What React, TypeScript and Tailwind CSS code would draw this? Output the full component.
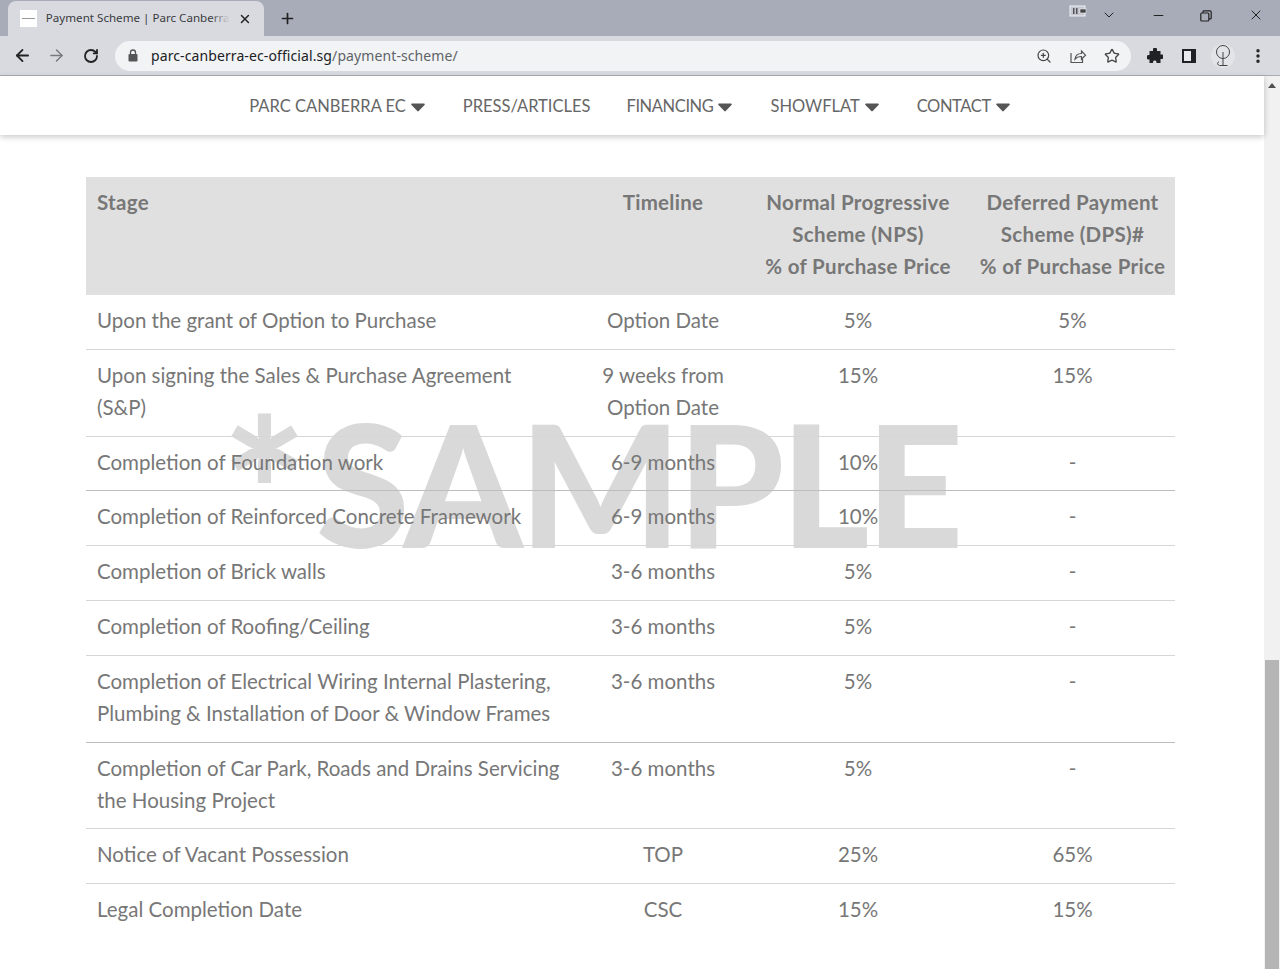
import { Star, X, Plus, Minus, ChevronDown, ZoomIn, MoreVertical, ArrowLeft, ArrowRight, RotateCw } from "lucide-react";

const navItems = [
  { label: "PARC CANBERRA EC", caret: true, track: "", space: "mx-[19px]" },
  { label: "PRESS/ARTICLES", caret: false, track: "", space: "mx-[19px]" },
  { label: "FINANCING", caret: true, track: "tracking-[-0.4px]", space: "ml-[17px] mr-[19px]" },
  { label: "SHOWFLAT", caret: true, track: "", space: "mx-[19px]" },
  { label: "CONTACT", caret: true, track: "tracking-[-0.4px]", space: "mx-[19px]" },
];

const rows = [
  { stage: ["Upon the grant of Option to Purchase"], time: ["Option Date"], nps: "5%", dps: "5%", line: "border-[#d6d6d6]" },
  { stage: ["Upon signing the Sales & Purchase Agreement", "(S&P)"], time: ["9 weeks from", "Option Date"], nps: "15%", dps: "15%", line: "border-[#d6d6d6]" },
  { stage: ["Completion of Foundation work"], time: ["6-9 months"], nps: "10%", dps: "-", line: "border-[#bdbdbd]" },
  { stage: ["Completion of Reinforced Concrete Framework"], time: ["6-9 months"], nps: "10%", dps: "-", line: "border-[#d6d6d6]" },
  { stage: ["Completion of Brick walls"], time: ["3-6 months"], nps: "5%", dps: "-", line: "border-[#d6d6d6]" },
  { stage: ["Completion of Roofing/Ceiling"], time: ["3-6 months"], nps: "5%", dps: "-", line: "border-[#d6d6d6]" },
  { stage: ["Completion of Electrical Wiring Internal Plastering,", "Plumbing & Installation of Door & Window Frames"], time: ["3-6 months"], nps: "5%", dps: "-", line: "border-[#bdbdbd]" },
  { stage: ["Completion of Car Park, Roads and Drains Servicing", "the Housing Project"], time: ["3-6 months"], nps: "5%", dps: "-", line: "border-[#d6d6d6]" },
  { stage: ["Notice of Vacant Possession"], time: ["TOP"], nps: "25%", dps: "65%", line: "border-[#d6d6d6]" },
  { stage: ["Legal Completion Date"], time: ["CSC"], nps: "15%", dps: "15%", line: "border-transparent" },
];

function Caret() {
  return (
    <svg width="14" height="9" viewBox="0 0 14 9" className="ml-[5px] mt-[2px]">
      <path d="M1.2 0.5h11.6c.9 0 1.3 1 .7 1.6L7.7 8.1c-.4.4-1 .4-1.4 0L.5 2.1C-.1 1.5.3.5 1.2.5z" fill="#555" />
    </svg>
  );
}

function Lines({ items }: { items: string[] }) {
  return (
    <>
      {items.map((t) => (
        <div key={t}>{t}</div>
      ))}
    </>
  );
}

function BrowserChrome() {
  return (
    <div className="h-[76px] shrink-0 border-b border-[#a9abb3]" style={{ fontFamily: '"Noto Sans", sans-serif' }}>
      <div className="h-9 bg-[#a8acb9] flex items-end pl-2 relative">
        <div className="w-[256px] h-[35px] bg-[#d8dae0] rounded-t-lg flex items-center pl-3 pr-3">
          <div className="w-[17px] h-[17px] bg-white flex items-center justify-center">
            <div className="w-[13px] h-px bg-[#999]" />
          </div>
          <span className="relative ml-[9px] -mt-[2px] w-[186px] overflow-hidden whitespace-nowrap text-[11.600px] text-[#3a3b3d]">
            Payment Scheme | Parc Canberra
            <span className="absolute right-0 top-0 h-full w-5 bg-gradient-to-r from-transparent to-[#d8dae0]" />
          </span>
          <X size={14} strokeWidth={2.6} className="ml-[8px] text-[#222]" />
        </div>
        <Plus size={17} strokeWidth={2.4} className="ml-[15px] mb-[9px] text-[#222]" />
        <div className="absolute right-0 top-0 flex items-start text-[#222]">
          <svg width="18" height="13" viewBox="0 0 18 13" className="mt-[5px] mr-[14px]">
            <rect x="1" y="1" width="15" height="10" fill="#c4c7d0" stroke="#eef0f4" />
            <rect x="4" y="3" width="1.5" height="6" fill="#555" />
            <rect x="7" y="3" width="1.5" height="6" fill="#555" />
            <rect x="11" y="4" width="6" height="4" fill="#444" stroke="#eef0f4" strokeWidth="0.6" />
          </svg>
          <ChevronDown size={16} strokeWidth={1.5} className="mt-[7px] mr-[34px]" />
          <Minus size={15} strokeWidth={1.6} className="mt-[8px] mr-[34px]" />
          <svg width="12" height="12" viewBox="0 0 12 12" fill="none" stroke="#222" strokeWidth="1.2" className="mt-[10px] mr-[36px]">
            <rect x="0.8" y="3" width="8" height="8" rx="1" />
            <path d="M3 3V1.6C3 1.1 3.4.8 3.9.8h6.100c.7 0 1.200.5 1.200 1.200v6c0 .5-.4.9-.9.9H9" />
          </svg>
          <X size={16} strokeWidth={1.5} className="mt-[7px] mr-[16px]" />
        </div>
      </div>
      <div className="h-[39px] bg-[#d8dae0] flex items-center">
        <ArrowLeft size={19} strokeWidth={2.3} className="ml-[13px] shrink-0 text-[#222]" />
        <ArrowRight size={19} strokeWidth={1.9} className="ml-[15px] shrink-0 text-[#777a80]" />
        <RotateCw size={16} strokeWidth={2.7} className="ml-[17px] shrink-0 text-[#222]" />
        <div className="ml-[16px] w-[1016px] h-[30px] shrink-0 rounded-full bg-[#f1f3f4] flex items-center">
          <svg width="10" height="13" viewBox="0 0 10 13" className="ml-[13px]">
            <path d="M2.500 5V3.500a2.500 2.500 0 0 1 5 0V5" fill="none" stroke="#555" strokeWidth="1.300" />
            <rect x="0.500" y="5" width="9" height="7.500" rx="1" fill="#555" />
          </svg>
          <span className="ml-[13px] text-[14px] tracking-[0.1px] text-[#202124]">
            parc-canberra-ec-official.sg<span className="text-[#5f6368]">/payment-scheme/</span>
          </span>
          <div className="ml-auto flex items-center mr-[11px] text-[#444]">
            <ZoomIn size={16} strokeWidth={1.8} />
            <svg width="18" height="16" viewBox="0 0 18 16" fill="none" stroke="#555" strokeWidth="1.2" className="ml-[17px]">
              <path d="M2 5v9.500h11.500V11" />
              <path d="M6 11c.5-3.500 3-5.500 6.500-5.500V3l4 4.200-4 4V8.500C9.500 8.500 7.500 9.300 6 11z" />
            </svg>
            <Star size={16} strokeWidth={2} className="ml-[17px]" />
          </div>
        </div>
        <svg width="16" height="16" viewBox="0 0 16 16" className="ml-[16px] shrink-0">
          <path d="M6 1.500a2 2 0 0 1 4 0V3h3.500v3.500H15a2.200 2.200 0 0 1 0 4.500h-1.500v4H9.500v-1a1.800 1.800 0 0 0-3.500 0v1H2.500v-3.500H1.500a2.200 2.200 0 0 1 0-4.500h1V3H6z" fill="#202124" />
        </svg>
        <svg width="16" height="16" viewBox="0 0 16 16" className="ml-[18px] shrink-0">
          <rect x="1" y="1" width="14" height="14" fill="#202124" />
          <rect x="3" y="3" width="7" height="10" fill="#e8e9ec" />
        </svg>
        <div className="ml-[14px] w-6 h-6 shrink-0 rounded-full bg-[#e3e4e8] flex items-center justify-center">
          <svg width="18" height="24" viewBox="0 0 18 24" fill="none" stroke="#444" strokeWidth="1">
            <circle cx="9" cy="8" r="6.500" />
            <path d="M9 8v13M5.500 21.500h8M5 18c-2 0-2 3 .5 3.500" />
          </svg>
        </div>
        <MoreVertical size={18} strokeWidth={2.6} className="ml-[14px] shrink-0 text-[#222]" />
      </div>
    </div>
  );
}

export default function App() {
  return (
    <div className="h-[969px] w-[1280px] overflow-hidden flex flex-col bg-white">
      <BrowserChrome />
      <div className="flex-1 flex min-h-0">
        <main className="flex-1 min-w-0 relative" style={{ fontFamily: 'Lato, sans-serif' }}>
          <nav className="h-[59px] bg-white shadow-[0_2px_6px_rgba(0,0,0,0.22)] flex items-center justify-center text-[16.500px] text-[#666] pt-[2px] pr-[5px] relative z-10">
            {navItems.map((item) => (
              <div key={item.label} className={`flex items-center ${item.space}`}>
                <span className={item.track}>{item.label}</span>
                {item.caret && <Caret />}
              </div>
            ))}
          </nav>
          <div className="pt-[42px] px-[86px] relative">
            <div className="absolute left-[219px] top-[251px] text-[170px] leading-[170px] font-black text-[#d9d9d9] whitespace-nowrap tracking-[-3.500px]">
              <span className="inline-block translate-x-[3px] translate-y-[18px] mr-[12px] text-[200px] tracking-normal">*</span>SAMPLE
            </div>
            <table className="relative w-[1089px] table-fixed border-collapse text-[20.500px] leading-[32px] text-[#777]">
              <colgroup>
                <col className="w-[494px]" />
                <col className="w-[166px]" />
                <col className="w-[224px]" />
                <col className="w-[205px]" />
              </colgroup>
              <thead>
                <tr className="bg-[#e0e0e0] align-top tracking-[0.3px]">
                  <th className="px-[11px] pt-[9px] pb-[13px] text-left font-bold">Stage</th>
                  <th className="px-[11px] pt-[9px] pb-[13px] text-center font-bold">Timeline</th>
                  <th className="px-[5px] pt-[9px] pb-[13px] text-center font-bold">
                    <Lines items={["Normal Progressive", "Scheme (NPS)", "% of Purchase Price"]} />
                  </th>
                  <th className="px-[5px] pt-[9px] pb-[13px] text-center font-bold">
                    <Lines items={["Deferred Payment", "Scheme (DPS)#", "% of Purchase Price"]} />
                  </th>
                </tr>
              </thead>
              <tbody>
                {rows.map((row) => (
                  <tr key={row.stage[0]} className={`align-top border-b ${row.line}`}>
                    <td className="px-[11px] pt-[9px] pb-[12.800px]"><Lines items={row.stage} /></td>
                    <td className="px-[11px] pt-[9px] pb-[12.800px] text-center"><Lines items={row.time} /></td>
                    <td className="px-[11px] pt-[9px] pb-[12.800px] text-center">{row.nps}</td>
                    <td className="px-[11px] pt-[9px] pb-[12.800px] text-center">{row.dps}</td>
                  </tr>
                ))}
              </tbody>
            </table>
          </div>
        </main>
        <div className="w-4 shrink-0 bg-[#f1f1f1] flex flex-col items-center">
          <div className="mt-[7px] w-0 h-0 border-x-[4px] border-x-transparent border-b-[5px] border-b-[#505050]" />
          <div className="mt-auto w-[14px] h-[309px] bg-[#b5b5b5]" />
        </div>
      </div>
    </div>
  );
}
